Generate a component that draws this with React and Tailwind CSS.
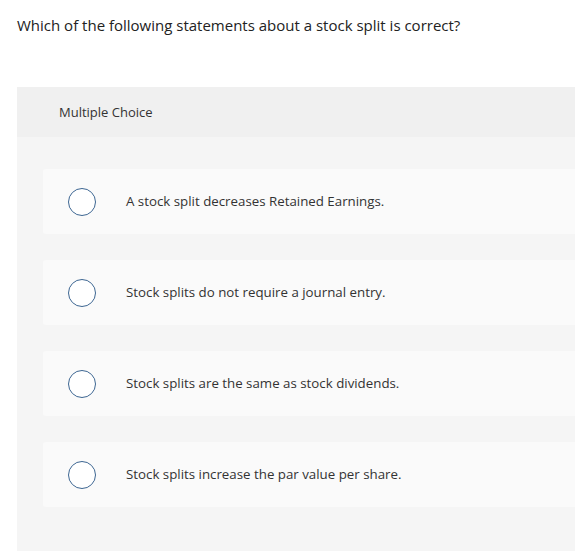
const choices = [
  "A stock split decreases Retained Earnings.",
  "Stock splits do not require a journal entry.",
  "Stock splits are the same as stock dividends.",
  "Stock splits increase the par value per share.",
];

export default function App() {
  return (
    <div
      className="w-[575px] h-[551px] overflow-hidden bg-white text-[#333]"
      style={{ fontFamily: '"Open Sans", Lato, sans-serif' }}
    >
      <h1 className="pl-[17px] pt-[15px] h-[87px] text-[15px] leading-[20px] text-[#222]">
        Which of the following statements about a stock split is correct?
      </h1>

      <div className="ml-[17px] h-full bg-[#f5f5f5]">
        <div className="h-[50px] bg-[#f0f0f0] flex items-center pl-[42px] text-[13px] pt-[1px]">
          Multiple Choice
        </div>

        <div className="pt-[32px] pl-[26px] flex flex-col gap-[26px]">
          {choices.map((c) => (
            <div
              key={c}
              className="h-[65px] bg-[#fafafa] rounded-l-[3px] flex items-center"
            >
              <span className="ml-[25px] w-[28px] h-[28px] rounded-full border-[1.5px] border-[#3d6692] bg-white shrink-0" />
              <span className="ml-[30px] pt-[1px] text-[13.3px] text-[#333]">{c}</span>
            </div>
          ))}
        </div>
      </div>
    </div>
  );
}
